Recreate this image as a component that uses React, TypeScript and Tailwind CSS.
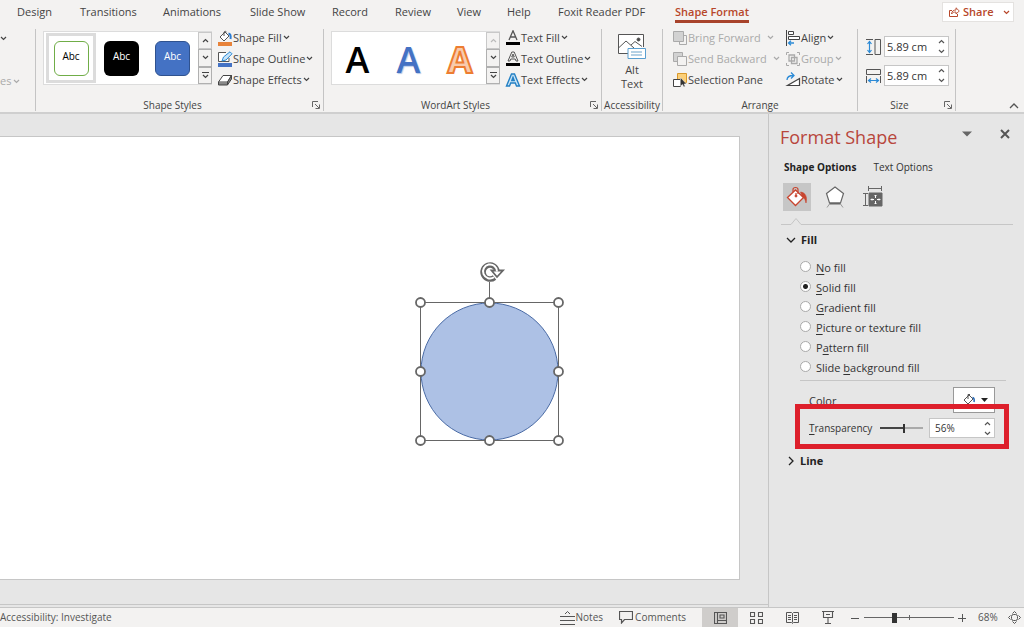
import * as React from "react";

type IconProps = { w: number; h: number; className?: string; children: React.ReactNode };

function Icon({ w, h, className = "", children }: IconProps) {
  return (
    <svg width={w} height={h} viewBox={`0 0 ${w} ${h}`} fill="none" stroke="currentColor" aria-hidden="true" className={`shrink-0 ${className}`}>
      {children}
    </svg>
  );
}

function Chevron({ up = false, className = "" }: { up?: boolean; className?: string }) {
  return (
    <Icon w={7} h={5} className={className}>
      <path d={up ? "M1 4l2.5-2.5L6 4" : "M1 1l2.5 2.5L6 1"} strokeWidth="1.2" />
    </Icon>
  );
}

/* ---------- ribbon icons ---------- */

const ShapeFillIcon = () => (
  <Icon w={16} h={16}>
    <path d="M3 7L8 2l4 4-5 5z" fill="#fff" stroke="#555" />
    <path d="M7 6V2a1.5 1.5 0 0 1 2.5 0" stroke="#555" />
    <path d="M11.5 3.5c2 .5 2.5 2.5 2 5.5" stroke="#2b7cd3" strokeWidth="2" />
    <path d="M1 14h14" stroke="#e8833a" strokeWidth="4" />
  </Icon>
);

const ShapeOutlineIcon = () => (
  <Icon w={16} h={16}>
    <path d="M9 1.5H1.5v9H12V7" stroke="#555" fill="#fff" />
    <path d="M5 10l1.5-4L13 .8l2 2L9 9z" fill="#c9e4f8" stroke="#2b8ad6" />
    <path d="M1 14h14" stroke="#4472c4" strokeWidth="4" />
  </Icon>
);

const ShapeEffectsIcon = () => (
  <Icon w={16} h={16}>
    <path d="M1.5 10L6 3.5h8.5L10.5 10z" fill="#fff" stroke="#444" />
    <path d="M1.5 10v3h9V10M10.5 13L14.5 7V3.5l-4 6.5z" fill="#888" stroke="#444" />
  </Icon>
);

function LetterIcon({ kind }: { kind: "fill" | "outline" | "effects" }) {
  if (kind === "effects") {
    return (
      <Icon w={16} h={16}>
        <path d="M1.5 14L6.5 2h3l5 12h-3l-1.2-3H5.7l-1.2 3zM6.8 8.5h2.4L8 5.2z" fill="#cde6f7" stroke="#2380c4" strokeWidth="1.4" />
      </Icon>
    );
  }
  return (
    <Icon w={16} h={16}>
      {kind === "fill" ? (
        <path d="M4 10L8 .8 12 10M5.5 7h5" stroke="#555" strokeWidth="1.3" />
      ) : (
        <path d="M3 10L6.8 1h2.4L13 10h-2l-.8-2H5.8L5 10zM6.7 6h2.6L8 3z" stroke="#555" />
      )}
      <path d="M1 13.5h14" stroke="#000" strokeWidth="3" />
    </Icon>
  );
}

const AltTextIcon = () => (
  <Icon w={28} h={26} className="text-[#555]">
    <path d="M10 19.5H.5v-19h25V13" fill="#fff" />
    <path d="M1 13.5l7-6.5 8 7M13 11l4-3.5 7 5" />
    <circle cx="20.5" cy="5.5" r="1.5" fill="#444" />
    <path d="M10 14.5h17.5v10H10z" fill="#fff" stroke="#5a9fd0" />
    <path d="M13 18h11M13 21h11" stroke="#6aa3cb" />
  </Icon>
);

const BringForwardIcon = () => (
  <Icon w={16} h={16} className="text-[#aaa]">
    <path d="M12 5.5h2.5v9H7.5V12" />
    <path d="M1.5 1.5h10v10h-10z" fill="#d2d2d2" />
  </Icon>
);

const SendBackwardIcon = () => (
  <Icon w={16} h={16} className="text-[#aaa]">
    <path d="M1.5 1.5h9v9h-9z" fill="#d2d2d2" />
    <path d="M5.5 5.5h9v9h-9z" fill="#f3f2f1" />
  </Icon>
);

const SelectionPaneIcon = () => (
  <Icon w={16} h={16}>
    <path d="M5.5 1.5h9v9h-9z" fill="#fbcf78" stroke="#d8982b" />
    <path d="M1.5 7.5h7v7h-7z" fill="#fff" stroke="#444" />
    <path d="M8.5 5.5v8.5l2-1.5 1.3 2.5 1.4-.7-1.2-2.3h2.5z" fill="#333" stroke="#f3f2f1" strokeWidth=".5" />
  </Icon>
);

const AlignIcon = () => (
  <Icon w={16} h={16} className="text-[#444]">
    <path d="M1.5 0v16" />
    <path d="M3.5 1.5h5v3h-5zM3.5 6.5h11v3h-11z" fill="#fff" />
    <path d="M9 13H3.5M6 10.8L3.5 13 6 15.2" stroke="#2b8ad6" strokeWidth="1.3" />
  </Icon>
);

const GroupIcon = () => (
  <Icon w={16} h={16} className="text-[#aaa]">
    <path d="M1.5 4V1.5H4M12 1.5h2.5V4M14.5 12v2.5H12M4 14.5H1.5V12" />
    <path d="M4 4h5.5v6H4zM6.5 6.5H12v6H6.5z" strokeWidth="1.3" />
  </Icon>
);

const RotateIcon = () => (
  <Icon w={16} h={16}>
    <path d="M2 8C2 4.5 4.5 3.5 8.5 3.5M6 .5l3 3-3 3" stroke="#2b8ad6" strokeWidth="1.3" />
    <path d="M2.5 13.5h12v-7z" fill="#fff" stroke="#444" strokeWidth="1.2" />
  </Icon>
);

const HeightIcon = () => (
  <Icon w={16} h={16}>
    <path d="M9 .5h5.5v15H9zM0 .5h7M0 15.5h7" stroke="#555" />
    <path d="M3.5 2.5v11M1.5 5l2-2.5 2 2.5M1.5 11l2 2.5 2-2.5" stroke="#2b8ad6" strokeWidth="1.2" />
  </Icon>
);

const WidthIcon = () => (
  <Icon w={16} h={16}>
    <path d="M.5 1.5h14v5H.5zM.5 8v7M14.5 8v7" stroke="#555" />
    <path d="M2.5 12.5h10M5 10.5l-2.5 2 2.5 2M10 10.5l2.5 2-2.5 2" stroke="#2b8ad6" strokeWidth="1.2" />
  </Icon>
);

/* ---------- ribbon parts ---------- */

const TABS = [
  { label: "Design", width: "w-[63px]" },
  { label: "Transitions", width: "w-[83px]" },
  { label: "Animations", width: "w-[87px]" },
  { label: "Slide Show", width: "w-[82px]" },
  { label: "Record", width: "w-[63px]" },
  { label: "Review", width: "w-[62px]" },
  { label: "View", width: "w-[50px]" },
  { label: "Help", width: "w-[51px]" },
  { label: "Foxit Reader PDF", width: "w-[117px]" },
];

function Group({ label, width, launcher = false, children }: { label: string; width: string; launcher?: boolean; children: React.ReactNode }) {
  return (
    <section aria-label={label} className={`flex h-[82px] shrink-0 flex-col justify-between border-r border-[#c4c4c4] ${width}`}>
      <div className="flex">{children}</div>
      <div className="flex h-3 items-center text-[10px] leading-3 whitespace-nowrap text-[#444]">
        <span className="flex-1 text-center">{label}</span>
        {launcher ? (
          <button type="button" aria-label={`${label} options`} className="w-[14px] pl-[3px]">
            <Icon w={8} h={8} className="text-[#666]">
              <path d="M.5 6V.5H6M3 3l4 4M7.5 3.5v4h-4" />
            </Icon>
          </button>
        ) : null}
      </div>
    </section>
  );
}

function Command({ icon, label, disabled = false, arrow = true, wide = false }: { icon: React.ReactNode; label: string; disabled?: boolean; arrow?: boolean; wide?: boolean }) {
  return (
    <button
      type="button"
      disabled={disabled}
      className="flex h-[21px] items-center text-[11px] leading-4 whitespace-nowrap text-[#444] disabled:text-[#aaa]"
    >
      {icon}
      <span>{label}</span>
      {arrow ? <Chevron className={wide ? "ml-[6px]" : "ml-px"} /> : null}
    </button>
  );
}

function GalleryScroll({ topDisabled = false }: { topDisabled?: boolean }) {
  return (
    <div className="flex w-[14px] flex-col text-[#444]">
      <button type="button" aria-label="Scroll up" disabled={topDisabled} className="flex flex-1 items-center justify-center border border-[#c8c8c8] bg-[#f3f2f1] disabled:text-[#bbb]">
        <Chevron up />
      </button>
      <button type="button" aria-label="Scroll down" className="flex flex-1 items-center justify-center border border-[#b0b0b0] bg-[#f3f2f1]">
        <Chevron />
      </button>
      <button type="button" aria-label="More styles" className="flex flex-1 items-center justify-center border border-[#b0b0b0] bg-[#f3f2f1]">
        <Icon w={7} h={7}>
          <path d="M0 .5h7M1 3l2.5 2.5L6 3" strokeWidth="1.2" />
        </Icon>
      </button>
    </div>
  );
}

function Spinner({ id, value, className, onStep }: { id: string; value: string; className: string; onStep: (d: number) => void }) {
  return (
    <div className={`flex items-center border border-[#c6c6c6] bg-white text-[#333] ${className}`}>
      <input id={id} type="text" readOnly value={value} className="w-0 min-w-0 flex-1 bg-transparent pl-[2px] leading-4 outline-none" />
      <div className="flex w-[14px] flex-col items-center gap-[5px] text-[#555]">
        <button type="button" aria-label="Increase" onClick={() => onStep(1)}><Chevron up className="block" /></button>
        <button type="button" aria-label="Decrease" onClick={() => onStep(-1)}><Chevron className="block" /></button>
      </div>
    </div>
  );
}

function SizeField({ id, label, icon }: { id: string; label: string; icon: React.ReactNode }) {
  const [value, setValue] = React.useState(589);
  return (
    <div className="flex items-center gap-[2px]">
      <label htmlFor={id} aria-label={label}>{icon}</label>
      <Spinner id={id} value={`${(value / 100).toFixed(2)} cm`} className="h-[21px] w-[65px] text-[11px]" onStep={(d) => setValue(value + d * 10)} />
    </div>
  );
}

function Ribbon() {
  return (
    <header className="border-b-2 border-[#cfcfcf] bg-[#f3f2f1]">
      <div className="flex h-7 items-start justify-between">
        <nav aria-label="Ribbon tabs" className="flex pt-1 pl-[17px] text-[11px] leading-4 whitespace-nowrap text-[#444]">
          {TABS.map((t) => (
            <button key={t.label} type="button" className={`border-b-[3px] border-transparent text-left ${t.width}`}>
              {t.label}
            </button>
          ))}
          <button type="button" aria-current="true" className="border-b-[3px] border-[#a8432b] font-semibold text-[#b7472a]">
            Shape Format
          </button>
        </nav>
        <button type="button" className="mt-[2px] mr-[10px] flex h-5 w-[72px] items-center border border-[#e4e2e0] bg-white pl-[5px] text-[11px] font-semibold text-[#b7472a]">
          <Icon w={12} h={12}>
            <path d="M4 4.5H1.5v6h8V8" />
            <path d="M3.5 8c.3-2.8 2-4 4.5-4V1.8L11.3 5 8 8V6C6 6 4.5 6.500 3.5 8z" strokeWidth=".9" />
          </Icon>
          <span className="ml-[3px]">Share</span>
          <Chevron className="mr-[3px] ml-auto" />
        </button>
      </div>

      <div className="flex h-[84px] pt-px">
        <div className="flex h-[82px] w-9 shrink-0 flex-col justify-between overflow-hidden border-r border-[#c4c4c4] pt-[7px] pb-[22px] text-[11px] text-[#aaa]">
          <button type="button" aria-label="Shape menu" className="text-[#444]"><Chevron className="block" /></button>
          <button type="button" disabled className="flex items-center leading-4">
            es <Chevron className="ml-[2px]" />
          </button>
        </div>

        <Group label="Shape Styles" width="w-[288px]" launcher>
          <div className="mt-[2px] ml-[7px] flex h-[54px] w-[169px] border border-r-0 border-[#dcdcdc] bg-white">
            <div className="flex flex-1 items-center pl-[2px] text-[10px]">
              <span className="flex h-[50px] w-[50px] items-center justify-center border-[3px] border-[#dcdcdc]">
                <button type="button" className="h-[35px] w-[35px] rounded-md border border-[#70ad47] bg-white pb-1 text-black">Abc</button>
              </span>
              <button type="button" className="ml-2 h-[35px] w-[35px] rounded-md bg-black pb-1 text-white">Abc</button>
              <button type="button" className="ml-4 h-[35px] w-[35px] rounded-md border border-[#2f528f] bg-[#4472c4] pb-1 text-white">Abc</button>
            </div>
            <GalleryScroll />
          </div>
          <div className="-mt-[2px] ml-[5px] flex flex-col items-start">
            <Command icon={<ShapeFillIcon />} label="Shape Fill" />
            <Command icon={<ShapeOutlineIcon />} label="Shape Outline" />
            <Command icon={<ShapeEffectsIcon />} label="Shape Effects" />
          </div>
        </Group>

        <Group label="WordArt Styles" width="w-[278px]" launcher>
          <div className="mt-[2px] ml-[7px] flex h-[54px] w-[169px] border border-r-0 border-[#dcdcdc] bg-white">
            <div className="flex flex-1 items-center justify-around pt-1 text-4xl leading-none font-semibold">
              <button type="button" className="text-black">A</button>
              <button type="button" className="text-[#4472c4] [text-shadow:1px_1px_1px_#b4c7e7]">A</button>
              <button type="button" className="font-bold text-[#f8cbad] [-webkit-text-stroke:2px_#ed7d31]">A</button>
            </div>
            <GalleryScroll topDisabled />
          </div>
          <div className="-mt-[2px] ml-[5px] flex flex-col items-start">
            <Command icon={<LetterIcon kind="fill" />} label="Text Fill" />
            <Command icon={<LetterIcon kind="outline" />} label="Text Outline" />
            <Command icon={<LetterIcon kind="effects" />} label="Text Effects" />
          </div>
        </Group>

        <Group label="Accessibility" width="w-[61px]">
          <button type="button" className="flex flex-1 flex-col items-center pt-[5px] text-[11px] leading-[14px] text-[#444]">
            <AltTextIcon />
            <span className="mt-[3px]">Alt<br />Text</span>
          </button>
        </Group>

        <Group label="Arrange" width="w-[195px]">
          <div className="-mt-[2px] ml-[9px] flex w-[113px] flex-col items-start">
            <Command icon={<BringForwardIcon />} label="Bring Forward" disabled wide />
            <Command icon={<SendBackwardIcon />} label="Send Backward" disabled wide />
            <Command icon={<SelectionPaneIcon />} label="Selection Pane" arrow={false} />
          </div>
          <div className="-mt-[2px] flex flex-col items-start">
            <Command icon={<AlignIcon />} label="Align" />
            <Command icon={<GroupIcon />} label="Group" disabled />
            <Command icon={<RotateIcon />} label="Rotate" />
          </div>
        </Group>

        <Group label="Size" width="w-[98px]" launcher>
          <div className="mt-[7px] ml-2 flex flex-col gap-2">
            <SizeField id="shape-height" label="Height" icon={<HeightIcon />} />
            <SizeField id="shape-width" label="Width" icon={<WidthIcon />} />
          </div>
        </Group>

        <div className="flex flex-1 items-end justify-end pr-[5px] pb-[3px]">
          <button type="button" aria-label="Collapse ribbon">
            <Icon w={10} h={6} className="text-[#555]"><path d="M1 5l4-4 4 4" strokeWidth="1.3" /></Icon>
          </button>
        </div>
      </div>
    </header>
  );
}

/* ---------- slide ---------- */

const HANDLES = [[10, 42], [79, 42], [148, 42], [10, 111], [148, 111], [10, 180], [79, 180], [148, 180]];

function SelectedCircle({ opacity }: { opacity: number }) {
  return (
    <svg width="158" height="190" viewBox="0 0 158 190" fill="none" role="img" aria-label="Selected circle" className="absolute top-[123px] left-[410px]">
      <circle cx="79.5" cy="111.5" r="68.5" fill="#4472c4" fillOpacity={opacity} stroke="#4a6ba5" />
      <path d="M10.5 42.5h138v138h-138zM79.5 22v20" stroke="#666" />
      {HANDLES.map(([x, y]) => (
        <circle key={`${x}-${y}`} cx={x + 0.5} cy={y + 0.5} r="4.5" fill="#fff" stroke="#666" strokeWidth="1.8" />
      ))}
      {/* rotate handle: outlined open ring with an arrow head */}
      <path d="M84.5 17.5A7 7 0 1 1 87 11" stroke="#666" strokeWidth="5.5" />
      <path d="M81.5 10.5H93l-6 6.5z" fill="#fff" stroke="#666" strokeWidth="1.8" />
      <path d="M84 17.2A7 7 0 1 1 87 11.5" stroke="#fff" strokeWidth="2" />
    </svg>
  );
}

/* ---------- format pane ---------- */

const FILLS = [
  { id: "none", text: ["", "N", "o fill"] },
  { id: "solid", text: ["", "S", "olid fill"] },
  { id: "gradient", text: ["", "G", "radient fill"] },
  { id: "picture", text: ["", "P", "icture or texture fill"] },
  { id: "pattern", text: ["P", "a", "ttern fill"] },
  { id: "background", text: ["Slide ", "b", "ackground fill"] },
];

function FormatPane({ transparency, onTransparency }: { transparency: number; onTransparency: (v: number) => void }) {
  const [fill, setFill] = React.useState("solid");

  return (
    <aside aria-label="Format Shape" className="w-[256px] shrink-0 border-l border-[#c6c6c6] pr-[10px] pl-[11px] text-[11px] text-[#333]">
      <div className="flex h-[45px] items-center pt-px">
        <h2 className="flex-1 text-lg text-[#b8463c]">Format Shape</h2>
        <button type="button" aria-label="Pane options" className="mr-7 mb-[6px]">
          <Icon w={10} h={6} className="text-[#666]"><path d="M0 .5h10L5 5.5z" fill="#666" stroke="none" /></Icon>
        </button>
        <button type="button" aria-label="Close pane" className="mr-1 mb-[6px]">
          <Icon w={10} h={10} className="text-[#555]"><path d="M1 1l8 8M9 1l-8 8" strokeWidth="2" /></Icon>
        </button>
      </div>

      <div className="flex h-4 items-center gap-[17px] pl-1 text-[10px] leading-4">
        <button type="button" className="font-bold text-[#222]">Shape Options</button>
        <button type="button">Text Options</button>
      </div>

      <div className="mt-2 flex gap-[10px] pl-[3px]">
        <button type="button" aria-label="Fill and line" className="flex h-7 w-7 items-center justify-center bg-[#c6c6c6]">
          <Icon w={22} h={22} className="text-[#c8452f]">
            <path d="M1.5 11.5L9.5 4l8 7.5-8 8z" fill="#fff" strokeWidth="1.3" />
            <path d="M7 6V3.5C7 .8 12 .8 12 3.5V8M10 7v3" strokeWidth="1.2" />
            <circle cx="10" cy="10" r="1" fill="#c8452f" />
            <path d="M14.5 6c5 .5 7 5 5.5 11-.5-3-1.5-5-3.5-6z" fill="#c8452f" strokeWidth=".6" />
          </Icon>
        </button>
        <button type="button" aria-label="Effects" className="flex h-7 w-7 items-center justify-center">
          <Icon w={20} h={22} className="text-[#666]">
            <path d="M10 1l8.5 6.5L15.5 17h-11L1.5 7.5z" fill="#fff" strokeWidth="1.2" />
            <path d="M4.5 17.5h11" strokeWidth="2" />
            <path d="M4.5 18L2 21.5M15.5 18l2.5 3.5" stroke="#999" />
          </Icon>
        </button>
        <button type="button" aria-label="Size and properties" className="flex h-7 w-7 items-center justify-center">
          <Icon w={20} h={22} className="text-[#666]">
            <path d="M5 2.500h14M5.5 0v5M18.5 0v5M2.5 7v13M0 7.500h5M0 19.500h5" />
            <path d="M6 7h13v13H6z" fill="#666" />
            <path d="M12.5 9v3M12.5 15v3M8 13.500h3M14 13.500h3M11.500 10l1-1 1 1M11.500 17l1 1 1-1M9 12.500l-1 1 1 1M16 12.500l1 1-1 1" stroke="#fff" />
          </Icon>
        </button>
      </div>

      <svg viewBox="0 0 232 9" className="mt-[6px] block h-[9px] w-full" fill="none" stroke="#c6c6c6" aria-hidden="true">
        <path d="M0 7.5h10l5-6 5 6h212" />
      </svg>

      <button type="button" className="mt-[6px] flex h-4 items-center gap-[5px] pl-[6px] leading-4 font-bold text-[#222]">
        <Icon w={10} h={6}><path d="M1 1l4 4 4-4" strokeWidth="1.3" /></Icon>
        Fill
      </button>

      <div role="radiogroup" aria-label="Fill type" className="mt-[10px] ml-5 flex flex-col">
        {FILLS.map((f) => (
          <label key={f.id} className="flex h-5 items-center gap-[5px] whitespace-nowrap">
            <input
              type="radio"
              name="fill"
              checked={fill === f.id}
              onChange={() => setFill(f.id)}
              className="mb-[3px] h-[11px] w-[11px] appearance-none rounded-full border border-[#aaa] bg-white checked:bg-[radial-gradient(#222_0_2px,#fff_3px)]"
            />
            <span className="leading-4">{f.text[0]}<u className="underline-offset-2">{f.text[1]}</u>{f.text[2]}</span>
          </label>
        ))}
      </div>

      <div className="mt-[2px] mr-2 ml-5 border-t border-[#c6c6c6] pt-[6px] pr-[11px] pl-[9px]">
        <div className="flex h-[26px] items-center justify-between">
          <span id="color-label" className="pt-[2px]">Color</span>
          <button type="button" aria-labelledby="color-label" className="flex h-[26px] w-[42px] items-center justify-center gap-[5px] border border-[#999] bg-white">
            <Icon w={15} h={14}>
              <path d="M3 7l5-5 4 4-5 5z" fill="#fff" stroke="#555" />
              <path d="M7 6V1.5h2" stroke="#555" />
              <path d="M11.5 4.5c2 .5 2 2 1.5 4.5" stroke="#2b6cb8" strokeWidth="1.6" />
              <path d="M1 13h13" stroke="#7d93bb" strokeWidth="2" />
            </Icon>
            <Icon w={7} h={4}><path d="M0 0h7L3.500 4z" fill="#222" stroke="none" /></Icon>
          </button>
        </div>

        <div className="relative mt-[5px] flex h-5 items-center text-[10px]">
          <label htmlFor="transparency" className="w-[71px]"><u className="underline-offset-2">T</u>ransparency</label>
          <input
            type="range"
            aria-label="Transparency"
            min={0}
            max={100}
            value={transparency}
            onChange={(e) => onTransparency(Number(e.target.value))}
            style={{ backgroundImage: `linear-gradient(to right, #444 ${transparency}%, #aaa ${transparency}%)` }}
            className="h-[2px] w-[43px] appearance-none [&::-webkit-slider-thumb]:h-[9px] [&::-webkit-slider-thumb]:w-[2px] [&::-webkit-slider-thumb]:appearance-none [&::-webkit-slider-thumb]:bg-[#333]"
          />
          <Spinner id="transparency" value={`${transparency}%`} className="ml-auto h-5 w-[66px] pl-[3px]" onStep={(d) => onTransparency(transparency + d)} />
          <div className="pointer-events-none absolute -top-[14px] -right-[14px] -bottom-[11px] -left-[14px] border-[5px] border-[#dd1f2b]" />
        </div>
      </div>

      <button type="button" className="mt-[15px] flex h-4 items-center gap-[6px] pl-2 leading-4 font-bold text-[#222]">
        <Icon w={6} h={10}><path d="M1 1l4 4-4 4" strokeWidth="1.3" /></Icon>
        Line
      </button>
    </aside>
  );
}

/* ---------- status bar ---------- */

function StatusBar() {
  const [zoom, setZoom] = React.useState(68);

  return (
    <footer className="flex h-5 items-center border-t border-[#c6c6c6] bg-[#f3f2f1] text-[10px] whitespace-nowrap text-[#555]">
      <button type="button">Accessibility: Investigate</button>
      <button type="button" className="ml-auto flex items-center gap-px">
        <Icon w={15} h={14}><path d="M0 5.5h15M0 9.5h15M0 13.5h15M5 3l2.5-2.5L10 3" /></Icon>
        Notes
      </button>
      <button type="button" className="ml-4 flex items-center gap-[2px]">
        <Icon w={14} h={13}><path d="M1 .5h12.5v8h-8L2.5 12V8.5H.5v-8z" strokeWidth="1.2" /></Icon>
        Comments
      </button>
      <div className="ml-4 flex h-full">
        <button type="button" aria-label="Normal view" className="flex h-full w-9 items-center justify-center bg-[#cfcdcb]">
          <Icon w={13} h={12}><path d="M.5.5h12v11H.5zM3.5.5v11M3.5 8.5h9M6 3h4v3H6z" strokeWidth="1.1" /></Icon>
        </button>
        <button type="button" aria-label="Slide sorter" className="flex h-full w-9 items-center justify-center">
          <Icon w={13} h={12}><path d="M.5.5h4v4h-4zM8.5.5h4v4h-4zM.5 7.5h4v4h-4zM8.5 7.5h4v4h-4z" strokeWidth="1.1" /></Icon>
        </button>
        <button type="button" aria-label="Reading view" className="flex h-full w-9 items-center justify-center">
          <Icon w={13} h={12}><path d="M.5.5h5l1 1 1-1h5v10h-5l-1 1-1-1h-5zM6.5 1.5v9M2 3.5h3M2 5.5h3M2 7.5h3M8 3.5h3M8 5.5h3M8 7.5h3" /></Icon>
        </button>
        <button type="button" aria-label="Slide show" className="flex h-full w-9 items-center justify-center">
          <Icon w={12} h={13}><path d="M0 .5h12M1.5.5v6h9v-6M4 3.5h4M6 7v5M3 12.5h6" strokeWidth="1.1" /></Icon>
        </button>
      </div>
      <button type="button" aria-label="Zoom out" className="ml-[5px]">
        <Icon w={8} h={8} className="block"><path d="M0 4.5h8" /></Icon>
      </button>
      <input
        type="range"
        aria-label="Zoom"
        min={20}
        max={165}
        value={zoom}
        onChange={(e) => setZoom(Number(e.target.value))}
        className="ml-[5px] h-[9px] w-[90px] appearance-none bg-[linear-gradient(#666,#666),linear-gradient(#666,#666)] bg-[length:100%_1px,1px_5px] bg-center bg-no-repeat [&::-webkit-slider-thumb]:h-[10px] [&::-webkit-slider-thumb]:w-[5px] [&::-webkit-slider-thumb]:appearance-none [&::-webkit-slider-thumb]:bg-[#333]"
      />
      <button type="button" aria-label="Zoom in" className="ml-1">
        <Icon w={8} h={8} className="block"><path d="M0 4.5h8M4.5 0v8" /></Icon>
      </button>
      <output className="ml-3 w-[30px]">{zoom}%</output>
      <button type="button" aria-label="Fit slide to window" className="mr-[3px]">
        <Icon w={13} h={13} className="block">
          <rect x="3.5" y="3.5" width="6" height="6" rx="2" />
          <path d="M4.5 2.5l2-2 2 2M4.5 10.5l2 2 2-2M2.5 4.5l-2 2 2 2M10.5 4.5l2 2-2 2" />
        </Icon>
      </button>
    </footer>
  );
}

export default function App() {
  const [transparency, setTransparency] = React.useState(56);

  return (
    <div className="flex min-h-screen flex-col overflow-hidden bg-[#e6e6e6] font-['Open_Sans','Noto_Sans',sans-serif]">
      <Ribbon />
      <div className="flex flex-1">
        <main className="mb-[2px] flex min-w-0 flex-1 border-b border-[#c6c6c6] pt-[22px] pr-7 pb-6">
          <div className="relative flex-1 border border-l-0 border-[#c6c6c6] bg-white">
            <SelectedCircle opacity={1 - transparency / 100} />
          </div>
        </main>
        <FormatPane transparency={transparency} onTransparency={setTransparency} />
      </div>
      <StatusBar />
    </div>
  );
}
